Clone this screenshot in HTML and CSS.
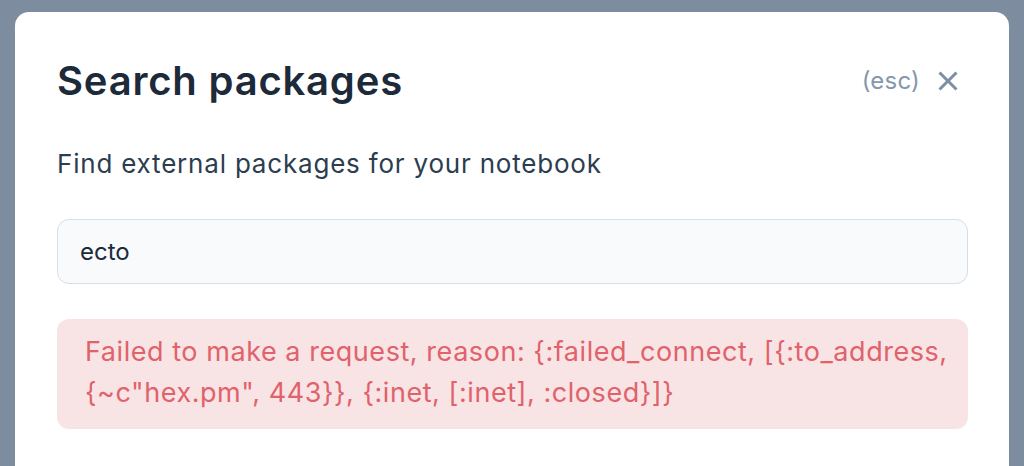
FILE: index.html
```html
<!DOCTYPE html>
<html lang="en">
<head>
<meta charset="utf-8">
<title>Search packages</title>
<link rel="stylesheet" href="styles.css">
</head>
<body>
<div class="overlay">
  <div class="modal">
    <div class="header">
      <h1 class="title">Search packages</h1>
      <div class="close">
        <span class="esc">(esc)</span>
        <svg class="x-icon" viewBox="0 0 24 24" width="36" height="36" aria-hidden="true">
          <path d="M12 10.586l4.95-4.95 1.414 1.414-4.95 4.95 4.95 4.95-1.414 1.414-4.95-4.95-4.95 4.95-1.414-1.414 4.95-4.95-4.95-4.95L7.05 5.636z" fill="currentColor"/>
        </svg>
      </div>
    </div>
    <p class="subtitle">Find external packages for your notebook</p>
    <input class="search" type="text" value="ecto">
    <div class="error">Failed to make a request, reason: {:failed_connect, [{:to_address, {~c"hex.pm", 443}}, {:inet, [:inet], :closed}]}</div>
  </div>
</div>
</body>
</html>
```

FILE: styles.css
```css
html, body {
  margin: 0;
  padding: 0;
  height: 100%;
  overflow: hidden;
}
body {
  background: #7d8c9e;
  font-family: Inter, "Noto Sans", sans-serif;
}
.overlay {
  padding: 12px 15px 0 15px;
}
.modal {
  background: #ffffff;
  border-radius: 14px 14px 0 0;
  padding: 45px 41px 60px 42px;
  height: 600px;
  box-sizing: border-box;
}
.header {
  display: flex;
  align-items: center;
  justify-content: space-between;
}
.title {
  margin: 0;
  font-size: 40px;
  line-height: 48px;
  font-weight: 600;
  color: #1c2a3a;
  letter-spacing: 0.8px;
}
.close {
  display: flex;
  align-items: center;
  gap: 10px;
  margin-right: 2px;
}
.esc {
  font-size: 24px;
  line-height: 36px;
  color: #8597ab;
  letter-spacing: 0.2px;
}
.x-icon {
  display: block;
  color: #7b8fa5;
}
.subtitle {
  margin: 40px 0 0 0;
  font-size: 26px;
  line-height: 38px;
  color: #2c3d50;
  letter-spacing: 0.8px;
}
.search {
  display: block;
  box-sizing: border-box;
  width: 100%;
  height: 65px;
  margin-top: 36px;
  padding: 0 22px;
  border: 1.5px solid #d6dfe9;
  border-radius: 12px;
  background: #f8fafc;
  font-family: Inter, "Noto Sans", sans-serif;
  font-size: 24px;
  color: #1c2a3a;
  outline: none;
}
.error {
  margin-top: 35px;
  padding: 12px 12px 16px 28px;
  border-radius: 12px;
  background: #f9e4e5;
  color: #e0626b;
  font-size: 27px;
  line-height: 41px;
  letter-spacing: 0.55px;
}
```
